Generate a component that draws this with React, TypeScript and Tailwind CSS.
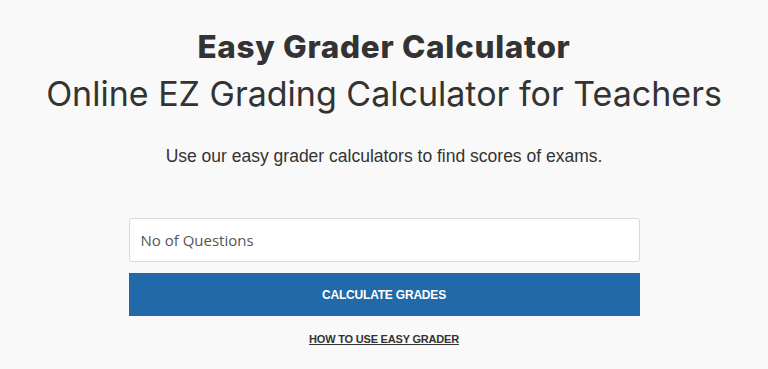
export default function App() {
  return (
    <div className="min-h-[369px] bg-[#f9f9f9] flex flex-col items-center font-['Inter',sans-serif] text-[#333]">
      <h1 className="mt-[28px] text-[31.5px] leading-[38px] font-extrabold tracking-[0.7px] text-[#333]">Easy Grader Calculator</h1>
      <h2 className="mt-[5px] text-[34px] leading-[46px] font-normal text-[#333]">Online EZ Grading Calculator for Teachers</h2>
      <p className="mt-[27px] text-[17.5px] leading-[24px] text-[#333] font-['Liberation_Sans',sans-serif]">
        Use our easy grader calculators to find scores of exams.
      </p>
      <div className="mt-[50px] w-[511px] flex flex-col">
        <input
          type="text"
          placeholder="No of Questions"
          className="h-[44px] w-full bg-white border border-[#d8d8d8] rounded-[3px] px-[11px] text-[15px] font-['Open_Sans',sans-serif] placeholder:text-[#555] outline-none"
        />
        <button className="mt-[11px] h-[43px] w-full bg-[#2169a8] text-white text-[12px] font-bold uppercase font-['Liberation_Sans',sans-serif] tracking-[-0.2px]">
          Calculate Grades
        </button>
        <a href="#" className="mt-[15px] self-center text-[11px] font-bold underline text-[#333] font-['Liberation_Sans',sans-serif] tracking-[-0.2px]">
          HOW TO USE EASY GRADER
        </a>
      </div>
    </div>
  );
}
